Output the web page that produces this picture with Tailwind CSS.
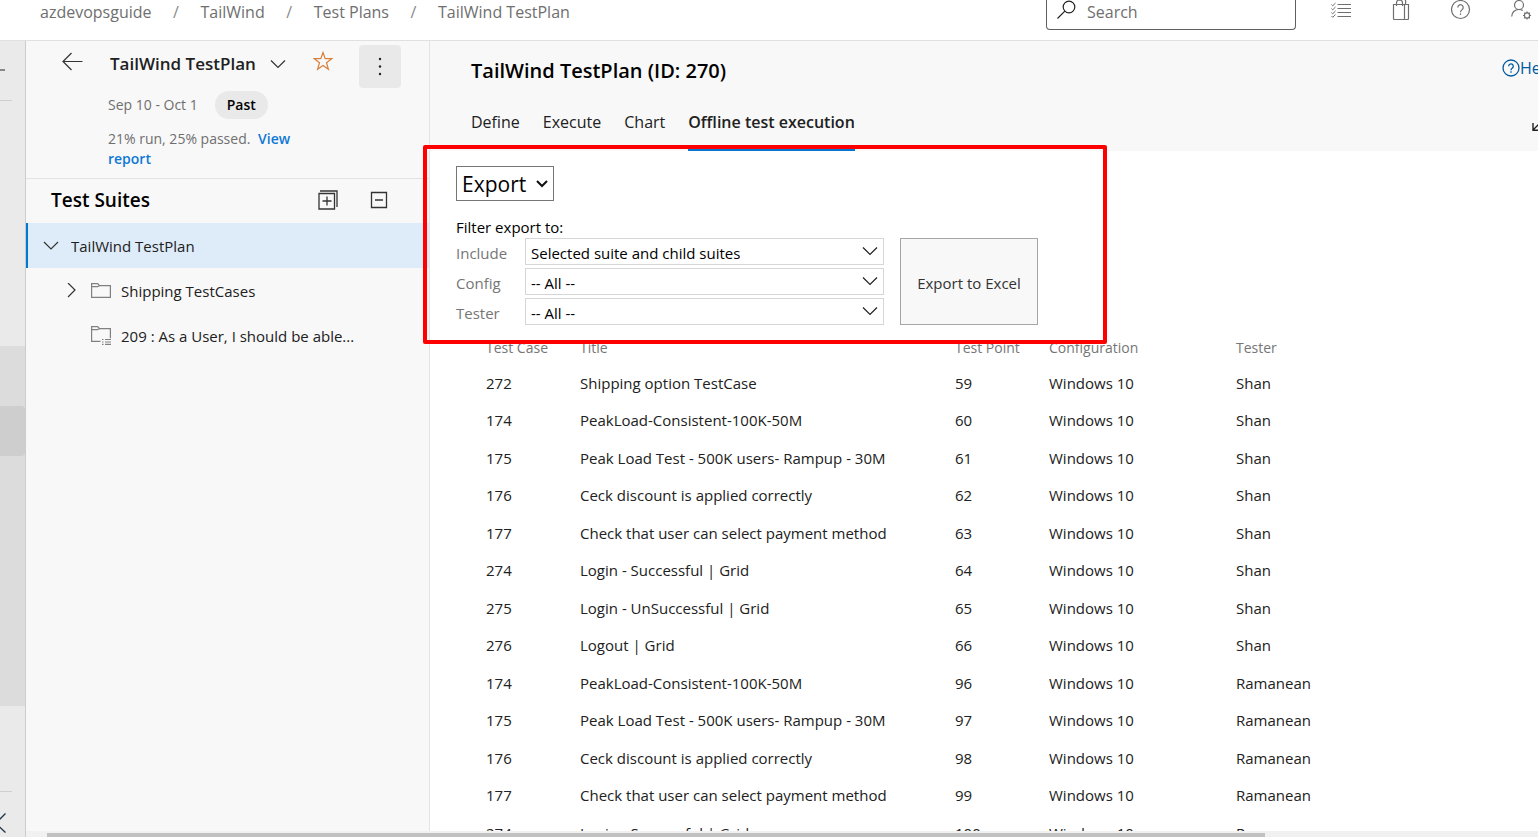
<!DOCTYPE html>
<html lang="en">
  <head>
    <meta charset="UTF-8" />
    <meta name="viewport" content="width=device-width, initial-scale=1.0" />
    <script src="https://cdn.jsdelivr.net/npm/@tailwindcss/browser@4"></script>
    <title>TailWind TestPlan - Test Plans</title>
  </head>

  <body
    class="h-screen flex flex-col overflow-hidden bg-white text-[15px] leading-5 text-[#212121] font-['Open_Sans','Noto_Sans',sans-serif]"
  >
    <!-- Top bar -->
    <header
      class="h-[41px] shrink-0 flex items-start border-b border-[#e0e0e0] pl-10 text-base leading-6 text-[#6f6f6f]"
    >
      <nav aria-label="Breadcrumb" class="flex-1">
        <ol class="flex whitespace-nowrap">
          <li><a href="#">azdevopsguide</a></li>
          <li class="w-[49px] text-center text-[#8a8a8a]">/</li>
          <li><a href="#">TailWind</a></li>
          <li class="w-[49px] text-center text-[#8a8a8a]">/</li>
          <li><a href="#">Test Plans</a></li>
          <li class="w-[49px] text-center text-[#8a8a8a]">/</li>
          <li><a href="#">TailWind TestPlan</a></li>
        </ol>
      </nav>

      <label
        class="w-[250px] h-[30px] flex items-start rounded-b-sm border border-t-0 border-[#5f5f5f] pl-2.5"
      >
        <svg class="w-5 h-5 shrink-0" viewBox="0 0 20 20" fill="none" stroke="#222" stroke-width="1.2">
          <circle cx="12" cy="7" r="5.8" />
          <path d="M7.8 11.1 0.5 18.5" />
        </svg>
        <input
          type="text"
          placeholder="Search"
          aria-label="Search"
          class="w-full h-6 pl-2.5 bg-transparent focus:outline-none placeholder:text-[#6f6f6f]"
        />
      </label>

      <div class="flex gap-10 pl-[35px] pr-[7px] text-[#6f6f6f]">
        <button aria-label="Work items">
          <svg class="w-5 h-5" viewBox="0 0 20 20" fill="none" stroke="currentColor" stroke-width="1.2">
            <path d="M6.5 4.5H20M6.5 8.5H20M6.500 12.5H20M6.500 16.5H20" />
            <path d="m.5 4.500 1.200 1.300L4.500 3M.5 8.500l1.200 1.300L4.500 7M.5 12.500l1.200 1.300L4.500 11M.5 16l1.200 1.300 2.800-2.800" stroke-width="1" />
          </svg>
        </button>
        <button aria-label="Marketplace">
          <svg class="w-5 h-5" viewBox="0 0 20 20" fill="none" stroke="currentColor" stroke-width="1.2">
            <path d="M2.5 4.500h15v14a1 1 0 0 1-1 1h-13a1 1 0 0 1-1-1zM13.500 4.500v15" />
            <path d="M5.500 6V3a3 3 0 0 1 6 0v3M8.500.500a3 3 0 0 1 6 2.500v1.500" />
          </svg>
        </button>
        <button aria-label="Help">
          <svg class="w-5 h-5" viewBox="0 0 20 20" fill="none" stroke="currentColor" stroke-width="1.2">
            <circle cx="9.5" cy="9.5" r="9" />
            <path d="M6.800 7.500a2.700 2.700 0 1 1 4.400 2c-1 .8-1.700 1.300-1.700 2.700" />
            <path d="M9.500 13.400v1.500" />
          </svg>
        </button>
        <button aria-label="User settings">
          <svg class="w-5 h-5" viewBox="0 0 20 20" fill="none" stroke="currentColor" stroke-width="1.2">
            <circle cx="8" cy="5" r="4.500" />
            <path d="M.700 16.500c0-4 3-7 7.300-7 1.500 0 2.800.400 3.800 1.100" />
            <circle cx="16" cy="15.500" r="2.600" />
            <path d="M16 11.500v1.400M16 18.100v1.400M12 15.500h1.400M18.600 15.500H20M13.200 12.700l1 1M17.800 17.300l1 1M13.200 18.300l1-1M17.800 13.700l1-1" />
          </svg>
        </button>
      </div>
    </header>

    <div class="flex-1 min-h-0 flex">
      <!-- Collapsed rail -->
      <div class="w-[26px] shrink-0 flex flex-col bg-[#eaeaea] border-r border-[#cccccc]">
        <div class="h-[305px] shrink-0 pt-7">
          <div class="w-[5px] h-0.5 bg-[#888]"></div>
          <div class="w-3 h-px mt-[29px] bg-[#cfcfcf]"></div>
        </div>
        <div class="h-[360px] shrink-0 pt-[60px] bg-[#dcdcdc]">
          <div class="h-[50px] rounded-r bg-[#cecece]"></div>
        </div>
        <div class="flex-1 flex flex-col justify-end pb-1">
          <div class="w-3 h-px bg-[#cfcfcf]"></div>
          <button aria-label="Expand navigation" class="mt-[21px] w-1.5">
            <svg class="w-1.5 h-5" viewBox="0 0 6 20" fill="none" stroke="#234" stroke-width="1.3">
              <path d="m5.500.500-6 6M-.500 14l6 5.500" />
            </svg>
          </button>
        </div>
      </div>

      <div class="flex-1 min-w-0 flex flex-col">
        <div class="flex-1 min-h-0 flex">
          <!-- Plan and suites -->
          <aside class="w-[404px] shrink-0 border-r border-[#e4e4e4] bg-[#f8f8f8]">
            <div class="h-[138px] border-b border-[#e2e2e2] pl-9 pr-7 pt-1">
              <div class="flex items-start">
                <button aria-label="Back" class="mt-1.5">
                  <svg class="w-[21px] h-5" viewBox="0 0 21 20" fill="none" stroke="#333" stroke-width="1.2">
                    <path d="M20.500 10.500H1M9.500 2 1 10.500l8.500 8.500" />
                  </svg>
                </button>
                <button class="ml-[27px] mt-[7px] flex items-center gap-3.5 text-[17px] leading-6 font-semibold whitespace-nowrap">
                  TailWind TestPlan
                  <svg class="w-4 h-4" viewBox="0 0 16 16" fill="none" stroke="#333" stroke-width="1.2">
                    <path d="m1 4.500 7 7 7-7" />
                  </svg>
                </button>
                <button aria-label="Favorite" class="ml-auto mt-1.5">
                  <svg class="w-5 h-5" viewBox="0 0 20 20" fill="none" stroke="#d67f3c" stroke-width="1.2">
                    <path d="m10 1.500 2.200 6.200h6.500l-5.200 4 1.900 6.500L10 14.400l-5.400 3.800 1.900-6.500-5.200-4h6.500z" />
                  </svg>
                </button>
                <button
                  aria-label="More options"
                  class="ml-[26px] w-[42px] h-[43px] flex items-center justify-center rounded-sm bg-[#e9e9e9]"
                >
                  <svg class="w-4 h-5" viewBox="0 0 16 20" fill="#222">
                    <circle cx="8" cy="2" r="1.200" />
                    <circle cx="8" cy="9.500" r="1.200" />
                    <circle cx="8" cy="17" r="1.200" />
                  </svg>
                </button>
              </div>

              <div class="ml-[46px] mt-[3px] flex items-center gap-[17px] text-sm text-[#6f6f6f]">
                <span>Sep 10 - Oct 1</span>
                <span class="h-7 px-3 rounded-full bg-[#e9e9e9] leading-7 font-semibold text-black">Past</span>
              </div>
              <p class="ml-[46px] mt-2.5 w-[200px] text-sm leading-5 text-[#6f6f6f]">
                21% run, 25% passed.
                <a href="#" class="ml-1 font-semibold text-[#0f78d4]">View report</a>
              </p>
            </div>

            <div class="h-11 flex items-center pl-[25px] pr-[41px] pb-0.5">
              <h2 class="flex-1 text-[19px] leading-6 font-semibold text-black">Test Suites</h2>
              <button aria-label="Expand all">
                <svg class="w-5 h-5" viewBox="0 0 20 20" fill="none" stroke="#333" stroke-width="1.3">
                  <path d="M1 3.500h15.500V19H1zM2 1h17v16" />
                  <path d="M4.500 11h9M9 6.500v9" />
                </svg>
              </button>
              <button aria-label="Collapse all" class="ml-8">
                <svg class="w-[18px] h-[18px]" viewBox="0 0 18 18" fill="none" stroke="#333" stroke-width="1.3">
                  <path d="M1.500 1.500h15v15h-15zM5 9h8" />
                </svg>
              </button>
            </div>

            <ul>
              <li class="h-[45px] flex items-center gap-3 border-l-2 border-[#0078d4] bg-[#deecf9] pl-[15px]">
                <svg class="w-4 h-4" viewBox="0 0 16 16" fill="none" stroke="#333" stroke-width="1.2">
                  <path d="m1 4 7 7 7-7" />
                </svg>
                <span>TailWind TestPlan</span>
              </li>
              <li class="h-[45px] flex items-center pl-[37px]">
                <svg class="w-4 h-4" viewBox="0 0 16 16" fill="none" stroke="#333" stroke-width="1.2">
                  <path d="m5 0 7 7-7 7" />
                </svg>
                <svg class="ml-3 w-5 h-4" viewBox="0 0 20 16" fill="none" stroke="#808080" stroke-width="1.2">
                  <path d="M.600 14.400V.600h6l2 2h10.800v11.800zM.600 3.700h5.800l2.200-1.100" />
                </svg>
                <span class="ml-2.5">Shipping TestCases</span>
              </li>
              <li class="h-[45px] flex items-center pl-[65px]">
                <svg class="w-5 h-5" viewBox="0 0 20 20" fill="none" stroke="#808080" stroke-width="1.2">
                  <path d="M9.500 15.400H.600V.600h6l2 2h10.800v9.600M.600 3.700h5.800l2.200-1.100" />
                  <path d="M11 13.500h1.500M14 13.500h6M11 16h1.500M14 16h6M11 18.400h1.500M14 18.400h6" />
                </svg>
                <span class="ml-2.5 w-[244px] truncate">209 : As a User, I should be able...</span>
              </li>
            </ul>
          </aside>

          <!-- Plan detail -->
          <main class="relative flex-1 min-w-0 flex flex-col">
            <div class="h-[110px] shrink-0 bg-[#f8f8f8] pl-[41px] pt-[17px]">
              <div class="flex items-start">
                <h1 class="flex-1 text-xl leading-[26px] font-semibold text-black">TailWind TestPlan (ID: 270)</h1>
                <!-- the link runs past the right edge of the window -->
                <a href="#" class="w-9 flex items-center overflow-hidden text-base leading-5 text-[#005a9e]">
                  <svg class="w-[18px] h-[18px] shrink-0" viewBox="0 0 18 18" fill="none" stroke="currentColor" stroke-width="1.3">
                    <circle cx="9" cy="9" r="8" />
                    <path d="M6.700 7.200a2.300 2.300 0 1 1 3.700 1.800C9.500 9.700 9 10.200 9 11.200" />
                    <path d="M9 12.300v1.400" />
                  </svg>
                  Help
                </a>
              </div>
              <div class="mt-3.5 flex items-start">
                <nav class="flex-1 flex gap-[23px] text-base leading-6">
                  <a href="#" class="pt-3">Define</a>
                  <a href="#" class="pt-3">Execute</a>
                  <a href="#" class="pt-3">Chart</a>
                  <a href="#" class="pt-3 h-[53px] border-b-2 border-[#0078d4] font-semibold">Offline test execution</a>
                </nav>
                <button aria-label="Full screen" class="mt-[25px] w-1.5">
                  <svg class="w-1.5 h-2" viewBox="0 0 6 8" fill="none" stroke="#222" stroke-width="1.4">
                    <path d="M1 0v7.300h5M1 7l6-6" />
                  </svg>
                </button>
              </div>
            </div>

            <div class="flex-1 min-h-0 overflow-hidden pl-[26px]">
              <div class="relative mt-[15px] w-[98px]">
                <select
                  aria-label="Action"
                  class="block w-full h-[35px] appearance-none border border-[#767676] bg-white pl-[5px] text-[21px] leading-8 text-black"
                >
                  <option>Export</option>
                </select>
                <svg
                  class="absolute right-1.5 top-[11px] w-3 h-3 pointer-events-none"
                  viewBox="0 0 12 12"
                  fill="none"
                  stroke="#111"
                  stroke-width="2"
                >
                  <path d="m1 4 5 5 5-5" />
                </svg>
              </div>

              <p class="mt-4 leading-[21px] text-black">Filter export to:</p>
              <div class="flex items-start gap-4">
                <div class="grid grid-cols-[69px_359px] gap-y-[3px] items-center text-black">
                  <label for="include" class="pt-0.5 text-[#767676]">Include</label>
                  <div class="relative">
                    <select id="include" class="block w-full h-[27px] appearance-none border border-[#d6d6d6] bg-white pl-[5px] pt-0.5 leading-5">
                      <option>Selected suite and child suites</option>
                    </select>
                    <svg class="absolute right-1.5 top-[5px] w-4 h-4 pointer-events-none" viewBox="0 0 16 16" fill="none" stroke="#222" stroke-width="1.2">
                      <path d="m1 4.500 7 7 7-7" />
                    </svg>
                  </div>
                  <label for="config" class="pt-0.5 text-[#767676]">Config</label>
                  <div class="relative">
                    <select id="config" class="block w-full h-[27px] appearance-none border border-[#d6d6d6] bg-white pl-[5px] pt-0.5 leading-5">
                      <option>-- All --</option>
                    </select>
                    <svg class="absolute right-1.5 top-[5px] w-4 h-4 pointer-events-none" viewBox="0 0 16 16" fill="none" stroke="#222" stroke-width="1.2">
                      <path d="m1 4.500 7 7 7-7" />
                    </svg>
                  </div>
                  <label for="tester" class="pt-0.5 text-[#767676]">Tester</label>
                  <div class="relative">
                    <select id="tester" class="block w-full h-[27px] appearance-none border border-[#d6d6d6] bg-white pl-[5px] pt-0.5 leading-5">
                      <option>-- All --</option>
                    </select>
                    <svg class="absolute right-1.5 top-[5px] w-4 h-4 pointer-events-none" viewBox="0 0 16 16" fill="none" stroke="#222" stroke-width="1.2">
                      <path d="m1 4.500 7 7 7-7" />
                    </svg>
                  </div>
                </div>
                <button class="w-[138px] h-[87px] pt-0.5 border border-[#a6a6a6] bg-[#f8f8f8] text-[#333]">
                  Export to Excel
                </button>
              </div>

              <table class="mt-1.5 ml-[30px] w-[calc(100%-30px)] table-fixed text-left">
                <thead class="text-sm text-[#767676]">
                  <tr class="h-[33px]">
                    <th class="w-[94px] font-normal">Test Case</th>
                    <th class="w-[375px] font-normal">Title</th>
                    <th class="w-[94px] font-normal">Test Point</th>
                    <th class="w-[187px] font-normal">Configuration</th>
                    <th class="font-normal">Tester</th>
                  </tr>
                </thead>
                <tbody id="points-body"></tbody>
              </table>
            </div>

            <!-- Highlight frame -->
            <div
              class="absolute -left-[7px] top-[104px] w-[684px] h-[199px] rounded-xs border-4 border-[#ff0000] pointer-events-none"
            ></div>
          </main>
        </div>

        <!-- Horizontal scroll -->
        <div class="h-1.5 shrink-0 pt-0.5 pl-[21px] bg-[#f1f1f1]">
          <div class="h-1 w-[calc(100%-273px)] bg-[#c1c1c1]"></div>
        </div>
      </div>
    </div>

    <script>
      const points = [
        [272, "Shipping option TestCase", 59, "Shan"],
        [174, "PeakLoad-Consistent-100K-50M", 60, "Shan"],
        [175, "Peak Load Test - 500K users- Rampup - 30M", 61, "Shan"],
        [176, "Ceck discount is applied correctly", 62, "Shan"],
        [177, "Check that user can select payment method", 63, "Shan"],
        [274, "Login - Successful | Grid", 64, "Shan"],
        [275, "Login - UnSuccessful | Grid", 65, "Shan"],
        [276, "Logout | Grid", 66, "Shan"],
        [174, "PeakLoad-Consistent-100K-50M", 96, "Ramanean"],
        [175, "Peak Load Test - 500K users- Rampup - 30M", 97, "Ramanean"],
        [176, "Ceck discount is applied correctly", 98, "Ramanean"],
        [177, "Check that user can select payment method", 99, "Ramanean"],
        [274, "Login - Successful | Grid", 100, "Ramanean"],
      ];

      const body = document.getElementById("points-body");
      points.forEach(([id, title, point, tester]) => {
        const row = document.createElement("tr");
        row.className = "odd:h-[37px] even:h-[38px]";
        [id, title, point, "Windows 10", tester].forEach((value) => {
          const td = document.createElement("td");
          td.textContent = value;
          row.appendChild(td);
        });
        body.appendChild(row);
      });
    </script>
  </body>
</html>
